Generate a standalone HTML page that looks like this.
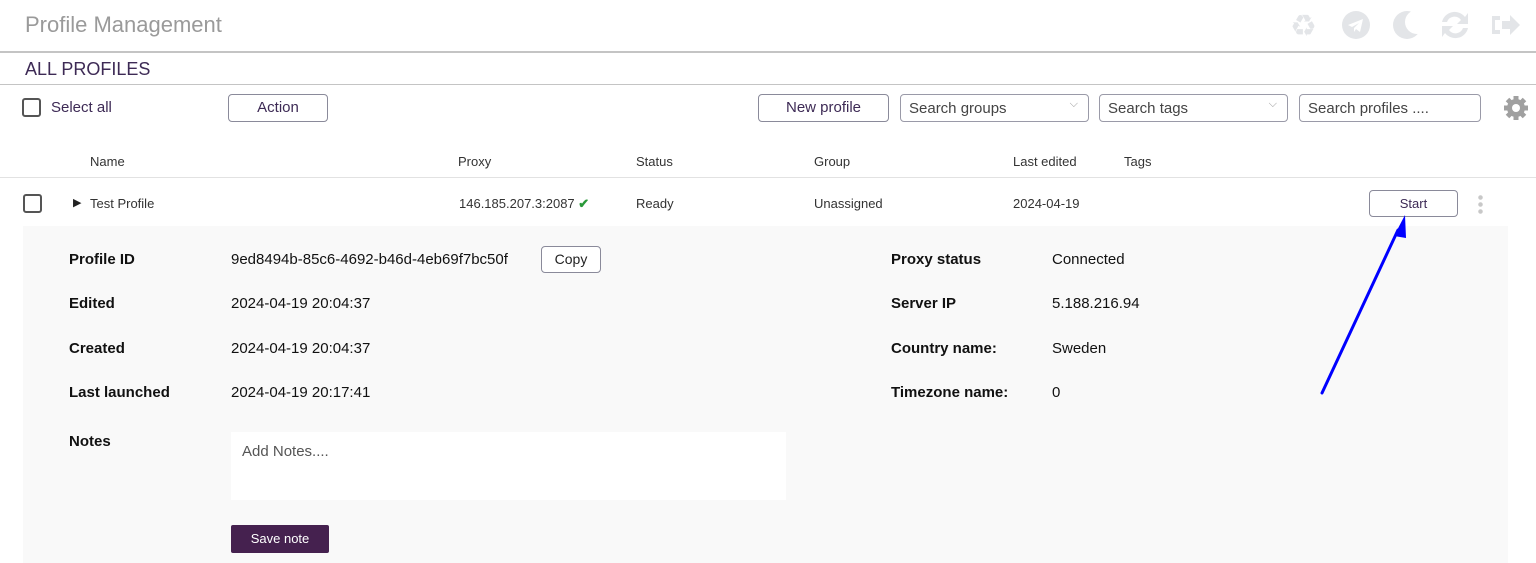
<!DOCTYPE html>
<html><head><meta charset="utf-8"><style>
*{margin:0;padding:0;box-sizing:border-box}
body{width:1536px;height:563px;overflow:hidden;background:#fff;font-family:"Liberation Sans",sans-serif;position:relative;color:#222}
.a{position:absolute;white-space:nowrap}
.btn{position:absolute;border:1px solid #8a8a9a;border-radius:4px;background:#fff;text-align:center;color:#3d2a55}
.inp{position:absolute;border:1px solid #9a9aa8;border-radius:4px;background:#fff;font-size:15px;color:#444;padding:6px 8px}
.cb{position:absolute;width:19px;height:19px;border:2px solid #555;border-radius:3px}
.h{font-size:13px;color:#333}
.b{font-size:15px;font-weight:bold;color:#111}
.v{font-size:15px;color:#111}
</style></head><body>
<div class="a" style="left:25px;top:12px;font-size:22px;color:#9a9a9a">Profile Management</div>
<svg class="a" style="left:1290px;top:8px" width="236" height="34">
<defs><mask id="m"><rect width="236" height="34" fill="#fff"/><circle cx="127" cy="14" r="12" fill="#000"/></mask></defs>
<g fill="#e3e5e8">
<text x="0" y="28" font-size="30" fill="#e3e5e8">♻</text>
<circle cx="66" cy="17" r="14"/>
<path d="M58 17l15-6-3 13-4-3-2 3v-4l5-5-7 4z" fill="#fff"/>
<circle cx="117" cy="17" r="14" mask="url(#m)"/>
<path d="M152 14a13 13 0 0 1 23-5l3-4v11h-11l4-4a8 8 0 0 0-14 2zM178 20a13 13 0 0 1-23 5l-3 4v-11h11l-4 4a8 8 0 0 0 14-2z"/>
<path d="M202 8h8v4h-5v10h5v4h-8zM212 13h8v-6l10 10-10 10v-6h-8z"/>
</g></svg>
<div class="a" style="left:0;top:51px;width:1536px;height:2px;background:#c4c4c4"></div>
<div class="a" style="left:25px;top:59px;font-size:18px;color:#3d2a55">ALL PROFILES</div>
<div class="a" style="left:0;top:84px;width:1536px;height:1px;background:#c4c4c4"></div>
<div class="cb" style="left:22px;top:98px"></div>
<div class="a" style="left:51px;top:99px;font-size:15px;color:#3d2a55">Select all</div>
<div class="btn" style="left:228px;top:94px;width:100px;height:28px;font-size:15px;line-height:26px">Action</div>
<div class="btn" style="left:758px;top:94px;width:131px;height:28px;font-size:15px;line-height:26px">New profile</div>
<div class="inp" style="left:900px;top:94px;width:189px;height:28px;padding-top:5px">Search groups<span style="position:absolute;right:10px;top:3px;color:#999;font-size:11px">⌵</span></div>
<div class="inp" style="left:1099px;top:94px;width:189px;height:28px;padding-top:5px">Search tags<span style="position:absolute;right:10px;top:3px;color:#999;font-size:11px">⌵</span></div>
<div class="inp" style="left:1299px;top:94px;width:182px;height:28px;padding-top:5px">Search profiles ....</div>
<svg class="a" style="left:1503px;top:95px" width="26" height="26" viewBox="0 0 26 26">
<g fill="#a0a0a0"><circle cx="13" cy="13" r="9"/>
<g stroke="#a0a0a0" stroke-width="5"><line x1="13" y1="1" x2="13" y2="25"/><line x1="1" y1="13" x2="25" y2="13"/><line x1="4.5" y1="4.5" x2="21.5" y2="21.5"/><line x1="21.5" y1="4.5" x2="4.5" y2="21.5"/></g></g>
<circle cx="13" cy="13" r="4" fill="#fff"/></svg>
<div class="a h" style="left:90px;top:154px">Name</div>
<div class="a h" style="left:458px;top:154px">Proxy</div>
<div class="a h" style="left:636px;top:154px">Status</div>
<div class="a h" style="left:814px;top:154px">Group</div>
<div class="a h" style="left:1013px;top:154px">Last edited</div>
<div class="a h" style="left:1124px;top:154px">Tags</div>
<div class="a" style="left:0;top:177px;width:1536px;height:1px;background:#e2e2e2"></div>
<div class="cb" style="left:23px;top:194px"></div>
<div class="a" style="left:73px;top:196px;font-size:11px">▶</div>
<div class="a h" style="left:90px;top:196px">Test Profile</div>
<div class="a h" style="left:459px;top:196px">146.185.207.3:2087 <span style="color:#2a9a3a;font-weight:bold">✔</span></div>
<div class="a h" style="left:636px;top:196px">Ready</div>
<div class="a h" style="left:814px;top:196px">Unassigned</div>
<div class="a h" style="left:1013px;top:196px">2024-04-19</div>
<div class="btn" style="left:1369px;top:190px;width:89px;height:27px;font-size:13px;line-height:25px">Start</div>
<div class="a" style="left:1478px;top:194px;width:5px;height:20px;background:radial-gradient(circle,#c8c8c8 2px,transparent 2.5px) 0 0/5px 7px"></div>
<div class="a" style="left:23px;top:226px;width:1485px;height:337px;background:#f9f9f9"></div>
<div class="a b" style="left:69px;top:251px">Profile ID</div>
<div class="a v" style="left:231px;top:251px">9ed8494b-85c6-4692-b46d-4eb69f7bc50f</div>
<div class="btn" style="left:541px;top:246px;width:60px;height:27px;font-size:14px;line-height:25px;color:#222">Copy</div>
<div class="a b" style="left:69px;top:295px">Edited</div>
<div class="a v" style="left:231px;top:295px">2024-04-19 20:04:37</div>
<div class="a b" style="left:69px;top:340px">Created</div>
<div class="a v" style="left:231px;top:340px">2024-04-19 20:04:37</div>
<div class="a b" style="left:69px;top:384px">Last launched</div>
<div class="a v" style="left:231px;top:384px">2024-04-19 20:17:41</div>
<div class="a b" style="left:69px;top:433px">Notes</div>
<div class="a" style="left:231px;top:432px;width:555px;height:68px;background:#fff;padding:11px;font-size:15px;color:#555">Add Notes....</div>
<div class="a" style="left:231px;top:525px;width:98px;height:28px;background:#45214f;color:#fff;font-size:13px;text-align:center;line-height:28px;border-radius:2px">Save note</div>
<div class="a b" style="left:891px;top:251px">Proxy status</div>
<div class="a v" style="left:1052px;top:251px">Connected</div>
<div class="a b" style="left:891px;top:295px">Server IP</div>
<div class="a v" style="left:1052px;top:295px">5.188.216.94</div>
<div class="a b" style="left:891px;top:340px">Country name:</div>
<div class="a v" style="left:1052px;top:340px">Sweden</div>
<div class="a b" style="left:891px;top:384px">Timezone name:</div>
<div class="a v" style="left:1052px;top:384px">0</div>
<svg class="a" style="left:0;top:0" width="1536" height="563">
<line x1="1322" y1="393" x2="1398" y2="230" stroke="#0000ff" stroke-width="3" stroke-linecap="round"/>
<polygon points="1405,215 1394,236 1406,238" fill="#0000ff"/>
</svg>
</body></html>
